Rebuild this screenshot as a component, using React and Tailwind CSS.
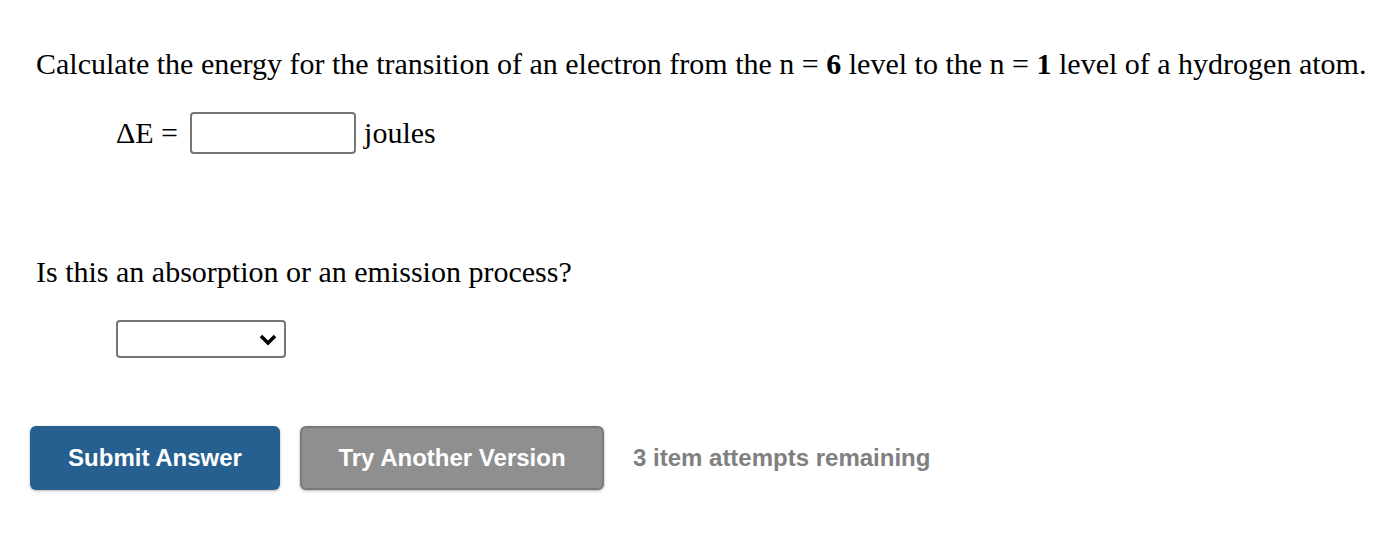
import React from 'react';

function App() {
  return (
    <div className="bg-white w-[1398px] h-[542px] font-['Liberation_Serif',serif] text-black">
      <div className="pt-[44px] pl-[36px]">
        <p className="text-[30px] leading-[40px] whitespace-nowrap">
          Calculate the energy for the transition of an electron from the n = <b>6</b> level to the n = <b>1</b> level of a hydrogen atom.
        </p>

        <div className="flex items-center pl-[80px] mt-[28px] text-[30px] leading-[40px]">
          <span>ΔE =</span>
          <input
            type="text"
            className="ml-[12px] w-[166px] h-[42px] border-2 border-[#767676] rounded-[4px] bg-white"
          />
          <span className="ml-[8px]">joules</span>
        </div>

        <p className="text-[30px] leading-[40px] mt-[98px]">Is this an absorption or an emission process?</p>

        <div className="pl-[80px] mt-[28px]">
          <div className="w-[170px] h-[38px] border-2 border-[#767676] rounded-[4px] flex items-center justify-end pr-[6px]">
            <svg width="20" height="14" viewBox="0 0 20 14">
              <path d="M3 4 L10 11 L17 4" fill="none" stroke="#000" strokeWidth="3.5" />
            </svg>
          </div>
        </div>
      </div>

      <div className="flex items-center pl-[30px] mt-[68px] font-['Liberation_Sans',Arial,sans-serif] font-bold text-[24px]">
        <button className="w-[250px] h-[64px] rounded-[6px] bg-[#266090] text-white shadow-[0_1px_3px_rgba(0,0,0,0.3)]">
          Submit Answer
        </button>
        <button className="ml-[20px] w-[304px] h-[64px] rounded-[6px] bg-[#8f8f8f] border-2 border-[#7a7a7a] text-white shadow-[0_1px_3px_rgba(0,0,0,0.3)]">
          Try Another Version
        </button>
        <span className="ml-[29px] text-[#808080]">3 item attempts remaining</span>
      </div>
    </div>
  );
}

export default App;
